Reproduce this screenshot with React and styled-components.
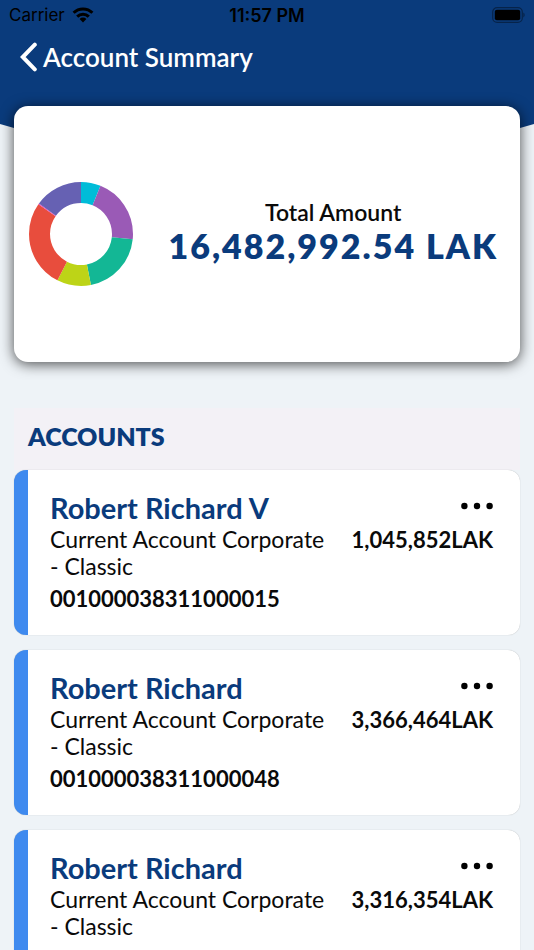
import React from "react";
import styled, { createGlobalStyle } from "styled-components";

const SEGMENTS = [
  { id: "cyan", color: "#00bcd8", from: 0, to: 22 },
  { id: "purple", color: "#9a5ab6", from: 22, to: 96 },
  { id: "green", color: "#13b795", from: 96, to: 169 },
  { id: "lime", color: "#bdd417", from: 169, to: 207 },
  { id: "red", color: "#e84d3d", from: 207, to: 305 },
  { id: "pink", color: "#ee3fb4", from: 305, to: 306 },
  { id: "indigo", color: "#6661b3", from: 306, to: 360 }
];

const ACCOUNTS = [
  {
    name: "Robert Richard V",
    type: "Current Account Corporate - Classic",
    number: "001000038311000015",
    balance: "1,045,852LAK"
  },
  {
    name: "Robert Richard",
    type: "Current Account Corporate - Classic",
    number: "001000038311000048",
    balance: "3,366,464LAK"
  },
  {
    name: "Robert Richard",
    type: "Current Account Corporate - Classic",
    balance: "3,316,354LAK"
  }
];

const WifiIcon = () => (
  <svg width="22" height="16" viewBox="0 0 22 16" aria-hidden="true">
    <g fill="none" stroke="#000" strokeWidth="3">
      <path d="M1.6 5.8a13.4 13.4 0 0 1 18.8 0" />
      <path d="M5.2 9.6a8.2 8.2 0 0 1 11.6 0" />
    </g>
    <path d="M11 15.4 7.6 12a4.8 4.8 0 0 1 6.8 0z" />
  </svg>
);

const BatteryIcon = () => (
  <svg width="34" height="16" viewBox="0 0 34 16" aria-hidden="true">
    <rect
      x="1.7"
      y="0.7"
      width="29.6"
      height="14.6"
      rx="4.4"
      fill="none"
      stroke="#000"
      strokeOpacity="0.4"
      strokeWidth="1.2"
    />
    <rect x="3.8" y="2.8" width="25.4" height="10.4" rx="2" />
    <path d="M32.4 5.6c1.6.7 1.6 4.1 0 4.8z" fillOpacity="0.45" />
  </svg>
);

const BackIcon = () => (
  <svg width="17" height="30" viewBox="0 0 17 30" aria-hidden="true">
    <path
      d="M14.8 2.7 2.8 15l12 12.3"
      fill="none"
      stroke="#fff"
      strokeWidth="4"
      strokeLinecap="round"
      strokeLinejoin="miter"
    />
  </svg>
);

const DotsIcon = () => (
  <svg width="32" height="8" viewBox="0 0 32 8" aria-hidden="true">
    <circle cx="3.4" cy="4" r="3.2" />
    <circle cx="16" cy="4" r="3.2" />
    <circle cx="28.6" cy="4" r="3.2" />
  </svg>
);

const Donut = () => (
  <svg width="104" height="104" viewBox="0 0 104 104" role="img" aria-label="Accounts share">
    <g transform="rotate(-90 52 52)" fill="none" strokeWidth="21">
      {SEGMENTS.map(({ id, color, from, to }) => (
        <circle
          key={id}
          cx="52"
          cy="52"
          r="41.5"
          pathLength="360"
          stroke={color}
          strokeDasharray={`${to - from} ${360 - to + from}`}
          strokeDashoffset={-from}
        />
      ))}
    </g>
  </svg>
);

const App = () => {
  return (
    <Screen>
      <GlobalStyle />
      <Header>
        <StatusBar>
          <Carrier>
            Carrier
            <WifiIcon />
          </Carrier>
          <Clock>11:57 PM</Clock>
          <Battery>
            <BatteryIcon />
          </Battery>
        </StatusBar>
        <NavBar>
          <BackButton type="button" aria-label="Back">
            <BackIcon />
          </BackButton>
          <Title>Account Summary</Title>
        </NavBar>
      </Header>
      <Content>
        <SummaryCard>
          <Donut />
          <Total>
            <TotalLabel>Total Amount</TotalLabel>
            <TotalValue>16,482,992.54 LAK</TotalValue>
          </Total>
        </SummaryCard>
        <SectionTitle>ACCOUNTS</SectionTitle>
        <AccountList>
          {ACCOUNTS.map(account => (
            <AccountCard key={account.balance}>
              <AccountInfo>
                <AccountName>{account.name}</AccountName>
                <AccountType>{account.type}</AccountType>
                {account.number && <AccountNumber>{account.number}</AccountNumber>}
              </AccountInfo>
              <AccountSide>
                <MoreButton type="button" aria-label="More options">
                  <DotsIcon />
                </MoreButton>
                <Balance>{account.balance}</Balance>
              </AccountSide>
            </AccountCard>
          ))}
        </AccountList>
      </Content>
    </Screen>
  );
};

export default App;

// Styled Component

const GlobalStyle = createGlobalStyle`
  * {
    box-sizing: border-box;
  }

  body {
    margin: 0;
    background-color: #eef3f7;
    font-family: Lato, "Liberation Sans", sans-serif;
    color: #0a0a0a;
  }

  h1, h2, h3, p, ul {
    margin: 0;
    padding: 0;
  }

  button {
    display: flex;
    padding: 0;
    border: 0;
    background: none;
    cursor: pointer;
  }
`;

const Screen = styled.div`
  height: 100vh;
  overflow-y: auto;
  scrollbar-width: none;
`;

const Header = styled.header`
  height: 159px;
  background-color: #0a3b7c;
  clip-path: ellipse(80% 100% at 50% 0);
`;

const StatusBar = styled.div`
  display: grid;
  grid-template-columns: 1fr auto 1fr;
  align-items: center;
  height: 30px;
  padding: 0 9px;
  color: #000;
  font-family: Inter, "Liberation Sans", sans-serif;
  font-size: 17px;
`;

const Carrier = styled.div`
  display: flex;
  align-items: center;
  gap: 7px;
`;

const Clock = styled.time`
  font-size: 18px;
  font-weight: 600;
`;

const Battery = styled.div`
  display: flex;
  justify-content: flex-end;
`;

const NavBar = styled.div`
  display: flex;
  align-items: center;
  gap: 6px;
  height: 54px;
  padding: 0 20px;
`;

const BackButton = styled.button`
  flex-shrink: 0;
`;

const Title = styled.h1`
  color: #fff;
  font-size: 26px;
  font-weight: 600;
`;

const Content = styled.main`
  position: relative;
  margin-top: -53px;
  padding: 0 14px 14px;
`;

const SummaryCard = styled.section`
  display: flex;
  align-items: center;
  justify-content: space-between;
  min-height: 256px;
  padding: 0 22px 4px 15px;
  border-radius: 14px;
  background-color: #fff;
  box-shadow: 0 2px 14px rgba(0, 0, 0, 0.7);

  > svg {
    margin-top: 4px;
  }
`;

const Total = styled.div`
  text-align: center;
`;

const TotalLabel = styled.p`
  font-size: 23px;
  font-weight: 600;
  line-height: 28px;
`;

const TotalValue = styled.p`
  color: #0a3b7c;
  font-size: 34px;
  font-weight: 800;
  letter-spacing: 2px;
  line-height: 40px;
`;

const SectionTitle = styled.h2`
  margin-top: 46px;
  padding: 12px 14px 18px;
  background-color: #f3f1f6;
  color: #0a3b7c;
  font-size: 25px;
  font-weight: 800;
  line-height: 32px;
`;

const AccountList = styled.ul`
  display: flex;
  flex-direction: column;
  gap: 15px;
  list-style: none;
`;

const AccountCard = styled.li`
  display: flex;
  justify-content: space-between;
  min-height: 165px;
  padding: 21px 27px 22px 22px;
  border-left: 14px solid #3f8aef;
  border-radius: 12px;
  background-color: #fff;
  box-shadow: 0 0 1px rgba(0, 0, 0, 0.3);
`;

const AccountInfo = styled.div`
  flex: 1;
  max-width: 280px;
`;

const AccountName = styled.h3`
  color: #0a3b7c;
  font-size: 29px;
  font-weight: 700;
  line-height: 34px;
`;

const AccountType = styled.p`
  margin-top: 1px;
  font-size: 23px;
  line-height: 27px;
`;

const AccountNumber = styled.p`
  margin-top: 5px;
  font-size: 22px;
  font-weight: 700;
  line-height: 28px;
`;

const AccountSide = styled.div`
  display: flex;
  flex-direction: column;
  align-items: flex-end;
`;

const MoreButton = styled.button`
  align-items: center;
  height: 30px;
`;

const Balance = styled.p`
  margin-top: 5px;
  font-size: 22px;
  font-weight: 700;
  line-height: 28px;
`;
